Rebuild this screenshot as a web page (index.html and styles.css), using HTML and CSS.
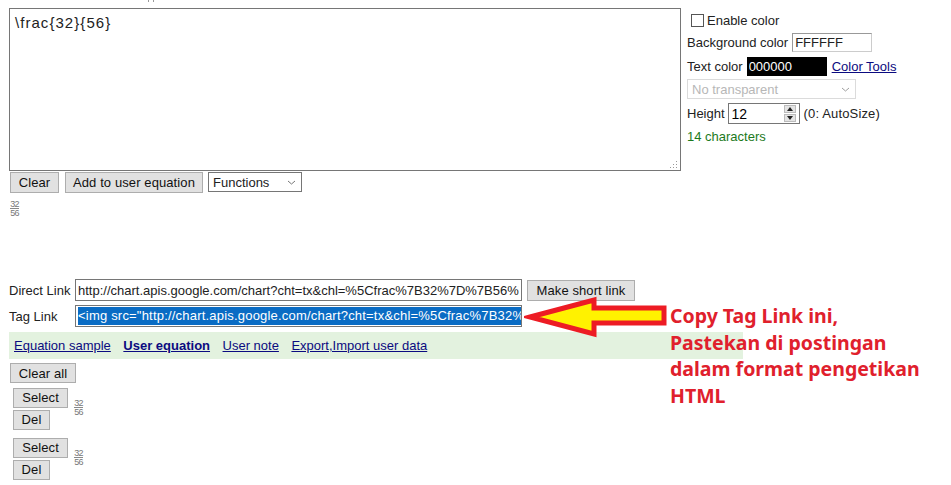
FILE: index.html
```html
<!DOCTYPE html>
<html lang="en">
<head>
    <meta charset="UTF-8">
    <title>Equation Editor</title>
    <link rel="stylesheet" href="styles.css">
</head>
<body>

<div class="top-mark"></div>

<div class="editor">
    <div class="source-wrap">
        <textarea class="source" spellcheck="false">\frac{32}{56}</textarea>
        <svg class="grip" width="8" height="8" viewBox="0 0 8 8" fill="#999">
            <rect x="6" y="0" width="1" height="1"/>
            <rect x="3" y="3" width="1" height="1"/>
            <rect x="6" y="3" width="1" height="1"/>
            <rect x="0" y="6" width="1" height="1"/>
            <rect x="3" y="6" width="1" height="1"/>
            <rect x="6" y="6" width="1" height="1"/>
        </svg>
    </div>
    <div class="options">
        <label class="enable"><input type="checkbox"> Enable color</label>
        <div class="opt-row">
            <span>Background color</span>
            <input type="text" class="color color-bg" value="FFFFFF">
        </div>
        <div class="opt-row">
            <span>Text color</span>
            <input type="text" class="color color-text" value="000000">
            <a href="#" class="tools">Color Tools</a>
        </div>
        <select class="transparent" disabled>
            <option>No transparent</option>
        </select>
        <div class="opt-row opt-height">
            <span>Height</span>
            <div class="height">
                <input type="text" value="12">
                <div class="spin">
                    <span class="spin-up"></span>
                    <span class="spin-down"></span>
                </div>
            </div>
            <span class="height-hint">(0: AutoSize)</span>
        </div>
        <div class="count">14 characters</div>
    </div>
</div>

<div class="actions">
    <button class="btn btn-clear">Clear</button>
    <button class="btn btn-add">Add to user equation</button>
    <select class="functions">
        <option>Functions</option>
    </select>
</div>

<div class="preview">
    <span class="frac"><span>32</span><span class="over">56</span></span>
</div>

<div class="link-row">
    <span class="link-label">Direct Link</span>
    <input type="text" class="link-input" value="http://chart.apis.google.com/chart?cht=tx&amp;chl=%5Cfrac%7B32%7D%7B56%7D">
    <button class="btn btn-short">Make short link</button>
</div>
<div class="link-row link-row-tag">
    <span class="link-label">Tag Link</span>
    <div class="link-input link-selected"><span>&lt;img src="http://chart.apis.google.com/chart?cht=tx&amp;chl=%5Cfrac%7B32%7D%7B56%7D"&gt;</span></div>
</div>

<div class="tabs">
    <a href="#">Equation sample</a>
    <a href="#" class="active">User equation</a>
    <a href="#">User note</a>
    <a href="#">Export,Import user data</a>
</div>

<button class="btn btn-clear-all">Clear all</button>

<div class="saved">
    <div class="saved-btns">
        <button class="btn btn-select">Select</button>
        <button class="btn btn-del">Del</button>
    </div>
    <span class="frac"><span>32</span><span class="over">56</span></span>
</div>
<div class="saved">
    <div class="saved-btns">
        <button class="btn btn-select">Select</button>
        <button class="btn btn-del">Del</button>
    </div>
    <span class="frac"><span>32</span><span class="over">56</span></span>
</div>

<!-- annotation drawn over the screenshot -->
<svg class="arrow" width="150" height="44" viewBox="0 0 150 44">
    <polygon points="6,21 70,4 70,12 140,12 140,27 70,27 70,38" fill="#fff200" stroke="#ed1c24" stroke-width="5"/>
</svg>
<div class="note">Copy Tag Link ini,<br>Pastekan di postingan<br>dalam format pengetikan<br>HTML</div>

</body>
</html>
```
FILE: styles.css
```css
body {
    margin: 0;
    padding: 8px 9px 0;
    height: 477px;
    overflow: hidden;
    position: relative;
    background-color: #fff;
    font-family: "Liberation Sans", Arial, sans-serif;
    font-size: 13px;
    color: #222;
}
a {
    color: #0b0b80;
}
input, select, button, textarea {
    font-family: "Liberation Sans", Arial, sans-serif;
    font-size: 13px;
    box-sizing: border-box;
    margin: 0;
}
.btn {
    background-color: #e1e1e1;
    border: 1px solid #adadad;
    border-radius: 0;
    color: #111;
    height: 21px;
    padding: 0;
    letter-spacing: 0.1px;
}
.top-mark {
    position: absolute;
    left: 148px;
    top: 0;
    width: 4px;
    height: 2px;
    border-left: 1px solid #999;
    border-right: 1px solid #999;
}

/* editor + options */
.editor {
    display: flex;
    height: 163px;
}
.source-wrap {
    position: relative;
    width: 672px;
    height: 163px;
}
.source {
    display: block;
    width: 672px;
    height: 163px;
    border: 1px solid #767676;
    border-radius: 0;
    padding: 6px 5px;
    font-size: 15px;
    letter-spacing: 1.05px;
    line-height: 16px;
    color: #222;
    resize: none;
    outline: none;
}
.grip {
    position: absolute;
    right: 3px;
    bottom: 2px;
}
.options {
    margin-left: 6px;
    display: flex;
    flex-direction: column;
    align-items: flex-start;
}
.enable {
    display: flex;
    align-items: center;
    gap: 3px;
    height: 14px;
    margin: 5px 0 6px 4px;
}
.enable input {
    appearance: none;
    width: 13px;
    height: 13px;
    border: 1px solid #555;
    background: #fff;
}
.opt-row {
    display: flex;
    align-items: center;
    gap: 4px;
    height: 19px;
    white-space: nowrap;
}
.color {
    width: 80px;
    height: 19px;
    padding: 0 2px;
    border: 1px solid #ccc;
    outline: none;
}
.color-bg {
    border-top-color: #999;
    border-left-color: #999;
    color: #222;
}
.color-text {
    background-color: #000;
    color: #fff;
    border-color: #000;
    margin-right: 1px;
    padding: 0 1px;
}
.opt-row + .opt-row {
    margin-top: 5px;
}
.transparent, .functions {
    appearance: none;
    background: #fff url("data:image/svg+xml,%3Csvg xmlns='http://www.w3.org/2000/svg' width='9' height='5'%3E%3Cpath d='M1 1l3.5 3L8 1' fill='none' stroke='%23777'/%3E%3C/svg%3E") no-repeat right 5px center;
    border-radius: 0;
}
.transparent {
    width: 169px;
    height: 20px;
    margin-top: 3px;
    border: 1px solid #ccc;
    color: #999;
    padding-left: 4px;
}
.opt-row.opt-height {
    gap: 3px;
    height: 21px;
    margin-top: 3px;
    padding-top: 1px;
}
.height {
    display: flex;
    align-items: center;
    width: 72px;
    height: 21px;
    padding-right: 3px;
    border: 1px solid #767676;
    box-sizing: border-box;
}
.height input {
    flex: 1;
    min-width: 0;
    height: 19px;
    padding: 0 3px;
    border: 0;
    outline: none;
    font-size: 14px;
}
.spin {
    display: flex;
    flex-direction: column;
    gap: 1px;
}
.spin span {
    display: flex;
    align-items: center;
    justify-content: center;
    width: 12px;
    height: 8px;
    background-color: #e4e4e4;
    border: 1px solid #bbb;
    box-sizing: border-box;
}
.spin span::after {
    content: "";
    border-left: 3px solid transparent;
    border-right: 3px solid transparent;
}
.spin-up::after {
    border-bottom: 4px solid #222;
}
.spin-down::after {
    border-top: 4px solid #222;
}
.height-hint {
    margin-left: 1px;
    letter-spacing: 0.15px;
}
.count {
    color: #1c7a1c;
    margin-top: 5px;
}

/* buttons under the editor */
.actions {
    display: flex;
    align-items: center;
    margin: 0 0 0 1px;
    height: 22px;
}
.btn-clear {
    width: 49px;
}
.btn-add {
    width: 138px;
    margin-left: 6px;
}
.functions {
    width: 94px;
    height: 20px;
    margin-left: 5px;
    border: 1px solid #767676;
    padding-left: 4px;
    color: #222;
}
.preview {
    display: flex;
    align-items: flex-start;
    margin: 0 0 0 1px;
    height: 86px;
    padding-top: 7px;
    box-sizing: border-box;
}

/* small rendered equation */
.frac {
    display: inline-flex;
    flex-direction: column;
    align-items: center;
    font-size: 9px;
    letter-spacing: -0.8px;
    line-height: 8px;
    color: #777;
    width: 9px;
}
.over {
    border-top: 1px solid #888;
    width: 100%;
    text-align: center;
}

/* link rows */
.link-row {
    display: flex;
    align-items: center;
    height: 22px;
}
.link-row-tag {
    margin-top: 4px;
}
.link-label {
    width: 66px;
    flex: none;
}
.link-input {
    width: 447px;
    height: 22px;
    padding: 0 2px;
    border: 1px solid #767676;
    outline: none;
    color: #222;
    font-size: 13px;
    white-space: nowrap;
    overflow: hidden;
    box-sizing: border-box;
    line-height: 20px;
}
.link-selected span {
    background-color: #0a6cc4;
    color: #fff;
    display: inline-block;
    height: 18px;
    line-height: 17px;
    margin-top: 1px;
    vertical-align: top;
    letter-spacing: 0.2px;
}
.btn-short {
    width: 108px;
    margin-left: 5px;
}

/* tabs */
.tabs {
    display: flex;
    align-items: center;
    gap: 12.5px;
    width: 729px;
    height: 27px;
    margin-top: 5px;
    padding-left: 5px;
    background-color: #e3f2df;
}
.tabs .active {
    font-weight: bold;
}

/* saved equations */
.btn-clear-all {
    display: block;
    width: 66px;
    height: 20px;
    margin: 4px 0 0 1px;
}
.saved {
    display: flex;
    align-items: center;
    margin: 4px 0 0 4px;
    height: 43px;
}
.saved + .saved {
    margin-top: 7px;
}
.saved-btns {
    width: 61px;
    display: flex;
    flex-direction: column;
    align-items: flex-start;
    gap: 2px;
}
.btn-select {
    width: 55px;
    height: 20px;
}
.btn-del {
    width: 37px;
    height: 20px;
}
.saved .frac {
    margin-top: -2px;
}

/* red annotation */
.arrow {
    position: absolute;
    left: 524px;
    top: 296px;
}
.note {
    position: absolute;
    left: 670px;
    top: 303px;
    font-family: "Noto Sans", sans-serif;
    font-weight: 700;
    font-size: 19.5px;
    line-height: 26.5px;
    color: #e0202c;
    white-space: nowrap;
}
```
